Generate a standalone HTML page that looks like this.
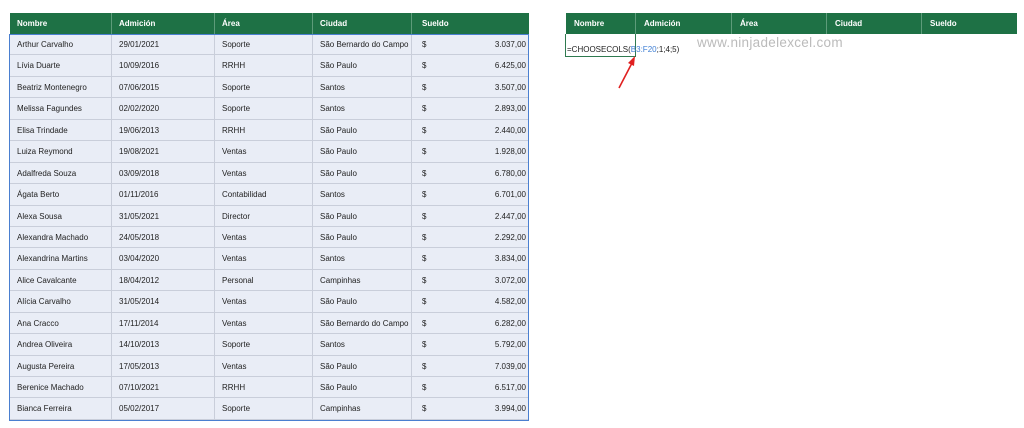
<!DOCTYPE html><html><head><style>
*{box-sizing:border-box}
body{margin:0;width:1024px;height:428px;background:#fff;font-family:"Liberation Sans",sans-serif;position:relative;overflow:hidden}
.t{position:absolute;left:10px;top:13px;width:519px;font-size:8px;color:#222}
.r{display:flex;height:21.44px;border-bottom:1px solid #c9ceda;background:#e9edf6}
.r div{height:100%;line-height:22px;padding-left:7px;border-right:1px solid #c9ceda;white-space:nowrap;overflow:hidden}
.h{background:#1e7145;color:#fff;font-weight:bold;height:21px;border-bottom:none}
.h div{border-right:1px solid #5d9c7a;line-height:21px}
.c1{width:102px}.c2{width:103px}.c3{width:98px}.c4{width:99px}.c5{width:117px;border-right:none!important;padding:0 3px 0 10px!important}
.c5 span{float:right}
.outline{position:absolute;left:9px;top:34px;width:520px;height:387px;border:1.5px solid #4a7fd0}
.h2{position:absolute;left:566px;top:13px;display:flex;font-size:8px;font-weight:bold;color:#fff;background:#1e7145;height:21px}
.h2 div{padding-left:8px;line-height:21px;border-right:1px solid #5d9c7a}
</style></head><body>
<div class="t">
<div class="r h"><div class="c1">Nombre</div><div class="c2">Admición</div><div class="c3">Área</div><div class="c4">Ciudad</div><div class="c5">Sueldo</div></div>
<div class="r"><div class="c1">Arthur Carvalho</div><div class="c2">29/01/2021</div><div class="c3">Soporte</div><div class="c4">São Bernardo do Campo</div><div class="c5">$<span>3.037,00</span></div></div>
<div class="r"><div class="c1">Lívia Duarte</div><div class="c2">10/09/2016</div><div class="c3">RRHH</div><div class="c4">São Paulo</div><div class="c5">$<span>6.425,00</span></div></div>
<div class="r"><div class="c1">Beatriz Montenegro</div><div class="c2">07/06/2015</div><div class="c3">Soporte</div><div class="c4">Santos</div><div class="c5">$<span>3.507,00</span></div></div>
<div class="r"><div class="c1">Melissa Fagundes</div><div class="c2">02/02/2020</div><div class="c3">Soporte</div><div class="c4">Santos</div><div class="c5">$<span>2.893,00</span></div></div>
<div class="r"><div class="c1">Elisa Trindade</div><div class="c2">19/06/2013</div><div class="c3">RRHH</div><div class="c4">São Paulo</div><div class="c5">$<span>2.440,00</span></div></div>
<div class="r"><div class="c1">Luiza Reymond</div><div class="c2">19/08/2021</div><div class="c3">Ventas</div><div class="c4">São Paulo</div><div class="c5">$<span>1.928,00</span></div></div>
<div class="r"><div class="c1">Adalfreda Souza</div><div class="c2">03/09/2018</div><div class="c3">Ventas</div><div class="c4">São Paulo</div><div class="c5">$<span>6.780,00</span></div></div>
<div class="r"><div class="c1">Ágata Berto</div><div class="c2">01/11/2016</div><div class="c3">Contabilidad</div><div class="c4">Santos</div><div class="c5">$<span>6.701,00</span></div></div>
<div class="r"><div class="c1">Alexa Sousa</div><div class="c2">31/05/2021</div><div class="c3">Director</div><div class="c4">São Paulo</div><div class="c5">$<span>2.447,00</span></div></div>
<div class="r"><div class="c1">Alexandra Machado</div><div class="c2">24/05/2018</div><div class="c3">Ventas</div><div class="c4">São Paulo</div><div class="c5">$<span>2.292,00</span></div></div>
<div class="r"><div class="c1">Alexandrina Martins</div><div class="c2">03/04/2020</div><div class="c3">Ventas</div><div class="c4">Santos</div><div class="c5">$<span>3.834,00</span></div></div>
<div class="r"><div class="c1">Alice Cavalcante</div><div class="c2">18/04/2012</div><div class="c3">Personal</div><div class="c4">Campinhas</div><div class="c5">$<span>3.072,00</span></div></div>
<div class="r"><div class="c1">Alícia Carvalho</div><div class="c2">31/05/2014</div><div class="c3">Ventas</div><div class="c4">São Paulo</div><div class="c5">$<span>4.582,00</span></div></div>
<div class="r"><div class="c1">Ana Cracco</div><div class="c2">17/11/2014</div><div class="c3">Ventas</div><div class="c4">São Bernardo do Campo</div><div class="c5">$<span>6.282,00</span></div></div>
<div class="r"><div class="c1">Andrea Oliveira</div><div class="c2">14/10/2013</div><div class="c3">Soporte</div><div class="c4">Santos</div><div class="c5">$<span>5.792,00</span></div></div>
<div class="r"><div class="c1">Augusta Pereira</div><div class="c2">17/05/2013</div><div class="c3">Ventas</div><div class="c4">São Paulo</div><div class="c5">$<span>7.039,00</span></div></div>
<div class="r"><div class="c1">Berenice Machado</div><div class="c2">07/10/2021</div><div class="c3">RRHH</div><div class="c4">São Paulo</div><div class="c5">$<span>6.517,00</span></div></div>
<div class="r"><div class="c1">Bianca Ferreira</div><div class="c2">05/02/2017</div><div class="c3">Soporte</div><div class="c4">Campinhas</div><div class="c5">$<span>3.994,00</span></div></div>
</div>
<div class="outline"></div>
<div class="h2"><div style="width:70px">Nombre</div><div style="width:96px">Admición</div><div style="width:95px">Área</div><div style="width:95px">Ciudad</div><div style="width:95px;border:none">Sueldo</div></div>
<div style="position:absolute;left:565px;top:34px;width:71px;height:23px;border:1.5px solid #2f7a50;border-top:none"></div>
<div style="position:absolute;left:697px;top:35px;font-size:13.5px;color:#bbb;letter-spacing:0.3px">www.ninjadelexcel.com</div>
<div style="position:absolute;left:567px;top:45px;font-size:8px;color:#222;white-space:nowrap">=CHOOSECOLS(<span style="color:#3f7fd4">B3:F20</span>;1;4;5)</div>
<svg style="position:absolute;left:0;top:0" width="1024" height="428"><line x1="619" y1="88" x2="632" y2="63" stroke="#e02020" stroke-width="1.6"/><polygon points="635,56 628,63 634,66" fill="#e02020"/></svg>
</body></html>
